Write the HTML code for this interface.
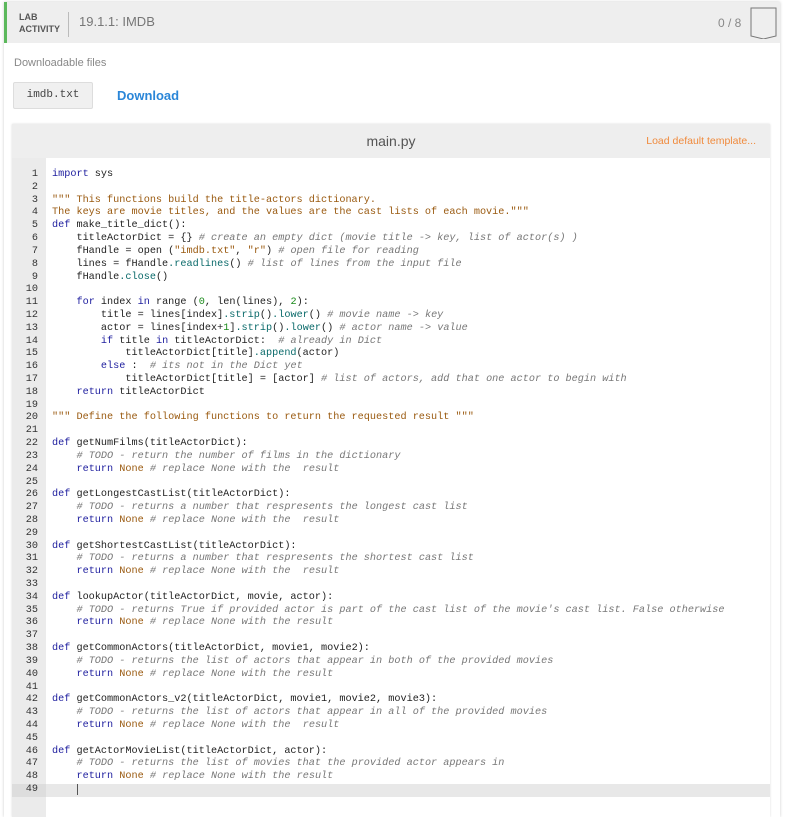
<!DOCTYPE html>
<html><head><meta charset="utf-8"><style>
*{margin:0;padding:0;box-sizing:border-box}
html,body{width:798px;height:817px;overflow:hidden}
body{background:#fff;font-family:"Liberation Sans",sans-serif;position:relative}
.card{position:absolute;left:4px;top:2px;width:776px;height:815px;background:#fff;box-shadow:0 0 3px rgba(0,0,0,.2)}
.hdr{position:absolute;left:0;top:0;width:776px;height:41px;background:#eeeeee;border-left:3px solid #5cb85c}
.lab{position:absolute;left:12px;top:9px;font-size:9px;font-weight:bold;color:#555;line-height:12px}
.sep{position:absolute;left:61px;top:10px;width:1px;height:25px;background:#bbb}
.ttl{position:absolute;left:72px;top:12px;font-size:13px;color:#777}
.score{position:absolute;left:711px;top:14px;font-size:12px;color:#888}
.dl{position:absolute;left:10px;top:55px;font-size:11px;color:#888}
.file{position:absolute;left:9px;top:80px;width:80px;height:27px;background:#f0f0f0;border:1px solid #ddd;border-radius:2px;font-family:"Liberation Mono",monospace;font-size:11px;color:#444;text-align:center;line-height:25px}
.dlink{position:absolute;left:113px;top:86px;font-size:13px;font-weight:bold;color:#2a86d8}
.ed{position:absolute;left:12px;top:124px;width:758px;height:693px;box-shadow:0 0 2px rgba(0,0,0,.15);overflow:hidden}
.edh{height:34px;background:#eeeeee;position:relative}
.edh .n{position:absolute;left:0;width:758px;text-align:center;top:9px;font-size:14px;color:#555}
.edh .l{position:absolute;right:14px;top:11px;font-size:10.5px;color:#f08a3c}
.gut{position:absolute;left:0;top:34px;width:34px;height:659px;background:#ebebeb}
.code{position:absolute;left:0;top:45px;width:758px;font-family:"Liberation Mono",monospace;font-size:10.2px;line-height:12.82px;color:#222;white-space:pre}
.ln{display:inline-block;width:26px;text-align:right;color:#333;margin-right:14px}
.k{color:#1d1d9e}.s{color:#9a5a10}.c{color:#777;font-style:italic}.g{color:#1a8a1a}.p{color:#0a6a6a}
.cur{background:#e8e8e8}
</style></head><body>
<div class="card">
<div class="hdr"><div class="lab">LAB<br>ACTIVITY</div><div class="sep"></div><div class="ttl">19.1.1: IMDB</div><div class="score">0 / 8</div>
<svg style="position:absolute;left:743px;top:5px" width="28" height="32"><path d="M1 1H26V29L13.5 32 1 29Z" fill="#eee" stroke="#777" stroke-width="1"/></svg></div>
<div class="dl">Downloadable files</div>
<div class="file">imdb.txt</div>
<div class="dlink">Download</div>
</div>
<div class="ed"><div class="edh"><div class="n">main.py</div><div class="l">Load default template...</div></div>
<div class="gut"></div>
<div class="code"><span class="ln">1</span><span class="k">import</span> sys
<span class="ln">2</span>
<span class="ln">3</span><span class="s">""" This functions build the title-actors dictionary.</span>
<span class="ln">4</span><span class="s">The keys are movie titles, and the values are the cast lists of each movie."""</span>
<span class="ln">5</span><span class="k">def</span> make_title_dict():
<span class="ln">6</span>    titleActorDict = {} <span class="c"># create an empty dict (movie title -&gt; key, list of actor(s) )</span>
<span class="ln">7</span>    fHandle = open (<span class="s">"imdb.txt"</span>, <span class="s">"r"</span>) <span class="c"># open file for reading</span>
<span class="ln">8</span>    lines = fHandle<span class="p">.readlines</span>() <span class="c"># list of lines from the input file</span>
<span class="ln">9</span>    fHandle<span class="p">.close</span>()
<span class="ln">10</span>
<span class="ln">11</span>    <span class="k">for</span> index <span class="k">in</span> range (<span class="g">0</span>, len(lines), <span class="g">2</span>):
<span class="ln">12</span>        title = lines[index]<span class="p">.strip</span>()<span class="p">.lower</span>() <span class="c"># movie name -&gt; key</span>
<span class="ln">13</span>        actor = lines[index+<span class="g">1</span>]<span class="p">.strip</span>()<span class="p">.lower</span>() <span class="c"># actor name -&gt; value</span>
<span class="ln">14</span>        <span class="k">if</span> title <span class="k">in</span> titleActorDict:  <span class="c"># already in Dict</span>
<span class="ln">15</span>            titleActorDict[title]<span class="p">.append</span>(actor)
<span class="ln">16</span>        <span class="k">else</span> :  <span class="c"># its not in the Dict yet</span>
<span class="ln">17</span>            titleActorDict[title] = [actor] <span class="c"># list of actors, add that one actor to begin with</span>
<span class="ln">18</span>    <span class="k">return</span> titleActorDict
<span class="ln">19</span>
<span class="ln">20</span><span class="s">""" Define the following functions to return the requested result """</span>
<span class="ln">21</span>
<span class="ln">22</span><span class="k">def</span> getNumFilms(titleActorDict):
<span class="ln">23</span>    <span class="c"># TODO - return the number of films in the dictionary</span>
<span class="ln">24</span>    <span class="k">return</span> <span class="s">None</span> <span class="c"># replace None with the  result</span>
<span class="ln">25</span>
<span class="ln">26</span><span class="k">def</span> getLongestCastList(titleActorDict):
<span class="ln">27</span>    <span class="c"># TODO - returns a number that respresents the longest cast list</span>
<span class="ln">28</span>    <span class="k">return</span> <span class="s">None</span> <span class="c"># replace None with the  result</span>
<span class="ln">29</span>
<span class="ln">30</span><span class="k">def</span> getShortestCastList(titleActorDict):
<span class="ln">31</span>    <span class="c"># TODO - returns a number that respresents the shortest cast list</span>
<span class="ln">32</span>    <span class="k">return</span> <span class="s">None</span> <span class="c"># replace None with the  result</span>
<span class="ln">33</span>
<span class="ln">34</span><span class="k">def</span> lookupActor(titleActorDict, movie, actor):
<span class="ln">35</span>    <span class="c"># TODO - returns True if provided actor is part of the cast list of the movie's cast list. False otherwise</span>
<span class="ln">36</span>    <span class="k">return</span> <span class="s">None</span> <span class="c"># replace None with the result</span>
<span class="ln">37</span>
<span class="ln">38</span><span class="k">def</span> getCommonActors(titleActorDict, movie1, movie2):
<span class="ln">39</span>    <span class="c"># TODO - returns the list of actors that appear in both of the provided movies</span>
<span class="ln">40</span>    <span class="k">return</span> <span class="s">None</span> <span class="c"># replace None with the result</span>
<span class="ln">41</span>
<span class="ln">42</span><span class="k">def</span> getCommonActors_v2(titleActorDict, movie1, movie2, movie3):
<span class="ln">43</span>    <span class="c"># TODO - returns the list of actors that appear in all of the provided movies</span>
<span class="ln">44</span>    <span class="k">return</span> <span class="s">None</span> <span class="c"># replace None with the  result</span>
<span class="ln">45</span>
<span class="ln">46</span><span class="k">def</span> getActorMovieList(titleActorDict, actor):
<span class="ln">47</span>    <span class="c"># TODO - returns the list of movies that the provided actor appears in</span>
<span class="ln">48</span>    <span class="k">return</span> <span class="s">None</span> <span class="c"># replace None with the result</span>
<div class="cur"><span class="ln" style="background:#ddd;margin-right:0;width:34px;padding-right:8px">49</span>     <span style="border-left:1px solid #555"> </span></div></div>
</div>
</body></html>
